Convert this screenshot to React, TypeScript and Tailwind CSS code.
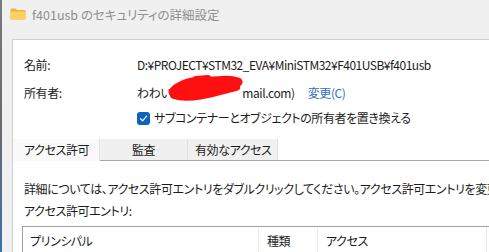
import React from "react";

const font = "font-['Noto_Sans_CJK_JP','Noto_Sans',sans-serif] [font-feature-settings:'palt']";

function Folder() {
  return (
    <svg width="16" height="12" viewBox="0 0 16 12" className="shrink-0">
      <path d="M0.5 1.5 Q0.5 0.5 1.5 0.5 H5.5 L7 2 H14.5 Q15.5 2 15.5 3 V10.5 Q15.5 11.5 14.5 11.5 H1.5 Q0.5 11.5 0.5 10.5 Z" fill="#e9b53e" />
      <path d="M0.5 3.5 H15.5 V10.5 Q15.5 11.5 14.5 11.5 H1.5 Q0.5 11.5 0.5 10.5 Z" fill="#fbd160" />
    </svg>
  );
}

function Scribble() {
  return (
    <svg width="76" height="28" viewBox="0 0 76 28" className="absolute left-[-4px] top-[-12px]">
      <g stroke="#ff1010" strokeLinecap="round" strokeLinejoin="round" fill="none">
        <path d="M5 18 C 12 10, 26 6, 38 7 S 58 4, 70 8" strokeWidth="9" />
        <path d="M6 21 C 20 26, 42 20, 68 13" strokeWidth="8" />
        <path d="M9 15 L 62 13" strokeWidth="10" />
        <path d="M28 5 L 40 4" strokeWidth="6" />
        <path d="M58 6 L 70 8" strokeWidth="6" />
      </g>
    </svg>
  );
}

export default function App() {
  return (
    <div className={`w-[489px] h-[252px] overflow-hidden flex bg-[#f0f0f0] text-[12px] tracking-[-0.4px] text-[#1b1b1b] ${font}`}>
      <div className="w-[2px] shrink-0 bg-gradient-to-b from-[#7a7a7a] via-[#6a6a6a] to-[#3b6fa8]" />
      <div className="flex-1 flex flex-col min-w-0">
        <div className="h-[39px] shrink-0 flex items-start pt-[8px] pl-[8px] gap-[6px]">
          <Folder />
          <span className="text-[#8f8f8f] text-[12.5px] tracking-normal leading-[13px] whitespace-nowrap">f401usb のセキュリティの詳細設定</span>
        </div>
        <div className="flex-1 ml-[10px] border-l border-t border-[#cfcfcf] bg-white flex flex-col min-w-0">
          <div className="pl-[11px] pt-[15px] flex flex-col">
            <div className="h-[20px] flex items-center">
              <span className="w-[113px] shrink-0">名前:</span>
              <span className="whitespace-nowrap tracking-[-0.5px]">D:¥PROJECT¥STM32_EVA¥MiniSTM32¥F401USB¥f401usb</span>
            </div>
            <div className="h-[20px] mt-[8px] flex items-center">
              <span className="w-[113px] shrink-0">所有者:</span>
              <span className="whitespace-nowrap">わわい</span>
              <span className="relative inline-block w-[70px] h-[14px] ml-[1px]">
                <Scribble />
              </span>
              <span className="whitespace-nowrap">mail.com)</span>
              <span className="ml-[13px] text-[#2d6fbf] whitespace-nowrap">変更(C)</span>
            </div>
            <div className="h-[20px] mt-[5px] flex items-center pl-[113px]">
              <span className="w-[13px] h-[13px] rounded-[3px] bg-[#0a64b8] flex items-center justify-center shrink-0">
                <svg width="9" height="9" viewBox="0 0 9 9">
                  <path d="M1.5 4.8 L3.6 6.8 L7.6 2.2" stroke="white" strokeWidth="1.2" fill="none" strokeLinecap="round" strokeLinejoin="round" />
                </svg>
              </span>
              <span className="ml-[4px] whitespace-nowrap">サブコンテナーとオブジェクトの所有者を置き換える</span>
            </div>
          </div>
          <div className="mt-[11px] flex h-[22px]">
            <div className="w-[87px] bg-[#f9f9f9] flex items-center pl-[11px] border-r border-[#e3e3e3]">アクセス許可</div>
            <div className="flex-1 flex border-b border-[#a8a8a8]">
              <div className="w-[88px] bg-[#f0f0f0] flex items-center justify-center border-r border-[#e0e0e0]">監査</div>
              <div className="w-[90px] bg-[#f0f0f0] flex items-center pl-[7px] border-r border-[#e0e0e0]">有効なアクセス</div>
              <div className="flex-1 bg-white" />
            </div>
          </div>
          <div className="pl-[11px] flex flex-col">
            <div className="h-[20px] mt-[18px] flex items-center whitespace-nowrap">
              詳細については、アクセス許可エントリをダブルクリックしてください。アクセス許可エントリを変更
            </div>
            <div className="h-[20px] mt-[2px] flex items-center">アクセス許可エントリ:</div>
            <div className="mt-[5px] ml-[-2px] border-l border-t border-[#a0a0a0] h-[30px] flex">
              <div className="w-[236px] pl-[7px] pt-[5px] border-r border-[#ececec]">プリンシパル</div>
              <div className="w-[59px] pl-[8px] pt-[5px] border-r border-[#ececec]">種類</div>
              <div className="w-[169px] pl-[8px] pt-[5px] border-r border-[#ececec]">アクセス</div>
            </div>
          </div>
        </div>
      </div>
    </div>
  );
}
